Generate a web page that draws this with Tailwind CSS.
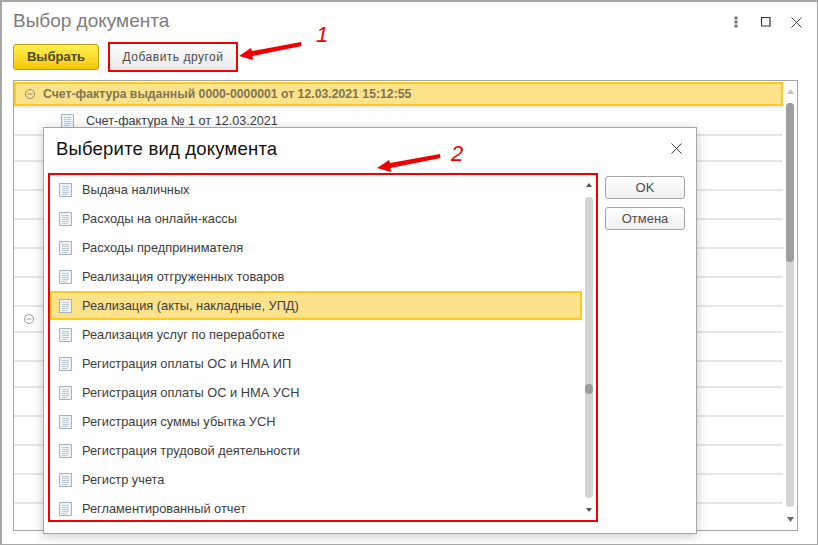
<!DOCTYPE html>
<html lang="ru">
<head>
    <meta charset="UTF-8">
    <title>Выбор документа</title>
    <script src="https://cdn.jsdelivr.net/npm/@tailwindcss/browser@4"></script>
</head>
<body class="bg-white font-['Liberation_Sans',Arial,sans-serif]">
<svg width="0" height="0" class="absolute">
    <symbol id="doc" viewBox="0 0 13 14">
        <path d="M.5.5h12v13H.5z" fill="#eef3f7" stroke="#a3b3c2"/>
        <path d="M3 3.500h7M3 5.500h7M3 7.500h7M3 9.500h7M3 11.500h5" stroke="#bfcad5"/>
    </symbol>
</svg>

<div class="relative w-[818px] h-[545px] overflow-hidden border border-[#a6a6a6] border-l-2 border-t-2">
    <!-- header -->
    <div class="flex items-center h-[40px] pl-[11px] pr-[15px]">
        <h1 class="text-[19px] text-[#7d7d7d] leading-none -mt-[3px]">Выбор документа</h1>
        <div class="ml-auto flex items-center">
            <svg width="4" height="12" viewBox="0 0 4 12" fill="#777"><rect x="0.500" y="0.500" width="3" height="3"/><rect x="0.500" y="4.500" width="3" height="3"/><rect x="0.500" y="8.500" width="3" height="3"/></svg>
            <svg width="10" height="10" viewBox="0 0 10 10" fill="none" stroke="#333" stroke-width="1.200" class="ml-[23px]"><path d="M.5.5h8.500v8.500H.5z"/></svg>
            <svg width="11" height="11" viewBox="0 0 11 11" stroke="#444" class="ml-[20px]"><path d="M.5.500l10 10M10.500.500l-10 10"/></svg>
        </div>
    </div>

    <!-- buttons -->
    <div class="flex items-start pl-[11px] h-[38px] pt-[2px]">
        <button class="w-[86px] h-[26px] rounded-[3px] border border-[#b79e12] bg-gradient-to-b from-[#fff04a] to-[#f6c800] text-[13px] font-bold text-[#4e4a2a]">Выбрать</button>
        <button class="ml-[9px] -mt-[2px] w-[130px] h-[30px] border-2 border-[#f00000] bg-gradient-to-b from-white to-[#e8e8e8] text-[12px] text-[#4d4d4d] tracking-[0.500px]">Добавить другой</button>
    </div>

    <!-- table under the dialog -->
    <div class="relative ml-[11px] w-[785px] h-[451px] border border-[#a6a6a6] pt-[1px]">
        <div class="w-[769px] h-[24px] border-2 border-[#fccb1f] bg-[#fde28c] flex items-center pl-[9px] text-[12.250px] font-bold text-[#7d7650]">
            <svg width="10" height="10" viewBox="0 0 10 10" fill="none" stroke="#8a8a7a" class="mr-[8px]"><circle cx="5" cy="5" r="4.500"/><path d="M2.500 5h5"/></svg>
            Счет-фактура выданный 0000-0000001 от 12.03.2021 15:12:55
        </div>
        <div class="w-[769px] flex flex-col">
            <div class="h-[30px] border-b-2 border-[#e6e6e6] border-t-2 border-t-[#ececec] flex items-center pl-[47px] text-[12.650px] text-[#3d3d3d]">
                <svg width="13" height="14" class="mr-[12px] shrink-0"><use href="#doc"/></svg>Счет-фактура № 1 от 12.03.2021
            </div>
            <div class="h-[26px] border-b-2 border-[#e6e6e6]"></div>
            <div class="h-[29px] border-b-2 border-[#e6e6e6]"></div>
            <div class="h-[29px] border-b-2 border-[#e6e6e6]"></div>
            <div class="h-[29px] border-b-2 border-[#e6e6e6]"></div>
            <div class="h-[29px] border-b-2 border-[#e6e6e6]"></div>
            <div class="h-[29px] border-b-2 border-[#e6e6e6]"></div>
            <div class="h-[26px] border-b-2 border-[#e6e6e6] flex items-center pl-[10px]">
                <svg width="10" height="10" viewBox="0 0 10 10" fill="none" stroke="#9a9a9a"><circle cx="5" cy="5" r="4.500"/><path d="M2.500 5h5"/></svg>
            </div>
            <div class="h-[29px] border-b-2 border-[#e6e6e6]"></div>
            <div class="h-[26px] border-b-2 border-[#e6e6e6]"></div>
            <div class="h-[29px] border-b-2 border-[#e6e6e6]"></div>
            <div class="h-[29px] border-b-2 border-[#e6e6e6]"></div>
            <div class="h-[29px] border-b-2 border-[#e6e6e6]"></div>
            <div class="h-[29px] border-b-2 border-[#e6e6e6]"></div>
        </div>
        <!-- scrollbar -->
        <div class="absolute left-[771px] top-[1px] w-[10px] flex flex-col items-center">
            <svg width="7" height="5" viewBox="0 0 7 5" class="mt-[7px]" fill="#c4c4c4"><path d="M3.500 0l3.500 5H0z"/></svg>
            <div class="mt-[9px] w-[8px] h-[404px] rounded-full bg-[#d4d4d4]">
                <div class="w-[8px] h-[159px] rounded-full bg-[#9e9e9e]"></div>
            </div>
            <svg width="7" height="5" viewBox="0 0 7 5" class="mt-[10px]" fill="#666"><path d="M0 0h7L3.500 5z"/></svg>
        </div>
    </div>

    <!-- dialog over the page -->
    <div class="absolute left-[41px] top-[125px] w-[654px] h-[407px] bg-white border border-[#a6a6a6] shadow-[0_2px_10px_rgba(0,0,0,0.22)]">
        <div class="flex items-center h-[45px] pb-[3px] pl-[12px] pr-[14px]">
            <h2 class="text-[18.500px] text-[#111] leading-none tracking-[0.200px]">Выберите вид документа</h2>
            <svg width="11" height="11" viewBox="0 0 11 11" stroke="#444" class="ml-auto -mt-[1px]"><path d="M.5.500l10 10M10.500.500l-10 10"/></svg>
        </div>
        <div class="flex">
            <div class="relative ml-[4px] w-[550px] h-[349px] border-2 border-[#f00000]">
                <div class="flex flex-col pl-[1px]">
                    <div class="h-[29px] flex items-center pl-[8px] text-[12.800px] text-[#3d3d3d]"><svg width="13" height="14" class="mr-[10px]"><use href="#doc"/></svg>Выдача наличных</div>
                    <div class="h-[29px] flex items-center pl-[8px] text-[12.800px] text-[#3d3d3d]"><svg width="13" height="14" class="mr-[10px]"><use href="#doc"/></svg>Расходы на онлайн-кассы</div>
                    <div class="h-[29px] flex items-center pl-[8px] text-[12.800px] text-[#3d3d3d]"><svg width="13" height="14" class="mr-[10px]"><use href="#doc"/></svg>Расходы предпринимателя</div>
                    <div class="h-[29px] flex items-center pl-[8px] text-[12.800px] text-[#3d3d3d]"><svg width="13" height="14" class="mr-[10px]"><use href="#doc"/></svg>Реализация отгруженных товаров</div>
                    <div class="h-[29px] w-[532px] -ml-[1px] flex items-center pl-[7px] text-[12.800px] text-[#3d3d3d] bg-[#fde28c] border-2 border-[#fccb1f]"><svg width="13" height="14" class="mr-[10px]"><use href="#doc"/></svg>Реализация (акты, накладные, УПД)</div>
                    <div class="h-[29px] flex items-center pl-[8px] text-[12.800px] text-[#3d3d3d]"><svg width="13" height="14" class="mr-[10px]"><use href="#doc"/></svg>Реализация услуг по переработке</div>
                    <div class="h-[29px] flex items-center pl-[8px] text-[12.800px] text-[#3d3d3d]"><svg width="13" height="14" class="mr-[10px]"><use href="#doc"/></svg>Регистрация оплаты ОС и НМА ИП</div>
                    <div class="h-[29px] flex items-center pl-[8px] text-[12.800px] text-[#3d3d3d]"><svg width="13" height="14" class="mr-[10px]"><use href="#doc"/></svg>Регистрация оплаты ОС и НМА УСН</div>
                    <div class="h-[29px] flex items-center pl-[8px] text-[12.800px] text-[#3d3d3d]"><svg width="13" height="14" class="mr-[10px]"><use href="#doc"/></svg>Регистрация суммы убытка УСН</div>
                    <div class="h-[29px] flex items-center pl-[8px] text-[12.800px] text-[#3d3d3d]"><svg width="13" height="14" class="mr-[10px]"><use href="#doc"/></svg>Регистрация трудовой деятельности</div>
                    <div class="h-[29px] flex items-center pl-[8px] text-[12.800px] text-[#3d3d3d]"><svg width="13" height="14" class="mr-[10px]"><use href="#doc"/></svg>Регистр учета</div>
                    <div class="h-[29px] flex items-center pl-[8px] text-[12.800px] text-[#3d3d3d]"><svg width="13" height="14" class="mr-[10px]"><use href="#doc"/></svg>Регламентированный отчет</div>
                </div>
                <div class="absolute right-[3px] top-0 w-[8px] h-full flex flex-col items-center">
                    <svg width="6" height="4" viewBox="0 0 6 4" class="mt-[8px]" fill="#555"><path d="M3 0l3 4H0z"/></svg>
                    <div class="relative mt-[10px] w-[8px] h-[301px] rounded-full bg-[#d4d4d4]">
                        <div class="absolute top-[187px] w-[8px] h-[10px] rounded-full bg-[#9a9a9a]"></div>
                    </div>
                    <svg width="6" height="4" viewBox="0 0 6 4" class="mt-[10px]" fill="#555"><path d="M0 0h6L3 4z"/></svg>
                </div>
            </div>
            <div class="ml-[7px] flex flex-col gap-[8px] pt-[3px]">
                <button class="w-[80px] h-[23px] rounded-[3px] border border-[#a6a6a6] bg-gradient-to-b from-white to-[#f0f0f0] text-[13px] text-[#4d4d4d]">OK</button>
                <button class="w-[80px] h-[23px] rounded-[3px] border border-[#a6a6a6] bg-gradient-to-b from-white to-[#f0f0f0] text-[13px] text-[#4d4d4d]">Отмена</button>
            </div>
        </div>
    </div>

    <!-- annotations -->
    <svg class="absolute left-[-2px] top-[-2px]" width="818" height="545" fill="#f00000">
        <path d="M239 56l12-8 1 3 49-9 .5 4-49 10 .5 4z"/>
        <path d="M377 168l12-8 1 3 50-9 .5 4-50 10 .5 4z"/>
    </svg>
    <span class="absolute left-[314px] top-[22px] text-[22px] italic text-[#f00000] leading-none">1</span>
    <span class="absolute left-[449px] top-[141px] text-[22px] italic text-[#f00000] leading-none">2</span>
</div>
</body>
</html>
